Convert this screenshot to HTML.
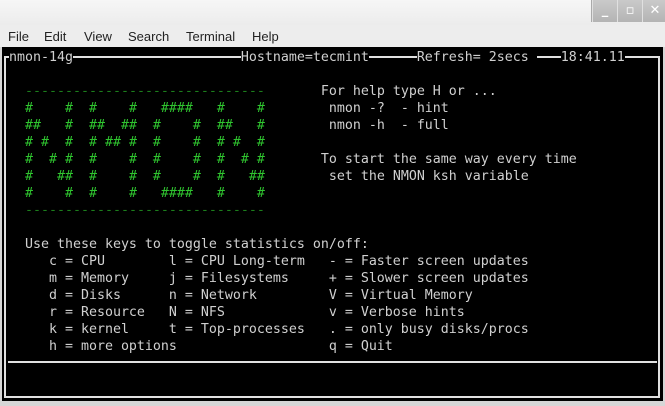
<!DOCTYPE html>
<html><head><meta charset="utf-8"><style>
body{margin:0;width:665px;height:406px;overflow:hidden;background:#d6d6d6;position:relative;font-family:"Liberation Sans",sans-serif}
#title{position:absolute;left:0;top:0;width:665px;height:25px;background:linear-gradient(#f6f6f6,#ececec)}
#btns{position:absolute;left:591px;top:0;width:74px;height:22px;background:linear-gradient(#cacaca,#b4b4b4);border-left:1px solid #aaa}
.b{position:absolute;top:0;height:22px;width:24px;color:#fff;font:bold 13px "DejaVu Sans",sans-serif;text-align:center;line-height:22px;border-left:1px solid #e0e0e0}
#menu{position:absolute;left:0;top:25px;width:665px;height:22px;background:#ededed;font-size:13px;color:#222}
#menu span{position:absolute;top:4px}
#term{position:absolute;left:2px;top:47px;width:661px;height:354px;background:#000}
pre{position:absolute;margin:0;left:1px;top:49px;font:13.29px/17px "DejaVu Sans Mono",monospace;color:#d0d0d0}
.g{color:#2fc42f}.d{color:#1c7f1c}
.ln{position:absolute;background:#e0e0e0}
.hb{background:#000}
</style></head><body>
<div id="title"></div>
<div id="btns"><div class="b" style="left:0">_</div><div class="b" style="left:25px">▫</div><div class="b" style="left:50px">✕</div></div>
<div id="menu"><span style="left:8px">File</span><span style="left:44px">Edit</span><span style="left:84px">View</span><span style="left:128px">Search</span><span style="left:186px">Terminal</span><span style="left:252px">Help</span></div>
<div id="term"></div>
<div class="ln" style="left:4px;top:56px;width:2px;height:342px"></div>
<div class="ln" style="left:658px;top:56px;width:2px;height:342px"></div>
<div class="ln" style="left:4px;top:56px;width:656px;height:2px"></div>
<div class="ln" style="left:4px;top:396px;width:656px;height:2px"></div>
<div class="ln" style="left:8px;top:361px;width:649px;height:2px"></div>
<pre> <span class="hb">nmon-14g</span>                     <span class="hb">Hostname=tecmint</span>      <span class="hb">Refresh= 2secs </span>   <span class="hb">18:41.11</span>

   <span class="d">------------------------------</span>       For help type H or ...
   <span class="g">#    #  #    #   ####   #    #</span>        nmon -?  - hint
   <span class="g">##   #  ##  ##  #    #  ##   #</span>        nmon -h  - full
   <span class="g"># #  #  # ## #  #    #  # #  #</span>
   <span class="g">#  # #  #    #  #    #  #  # #</span>       To start the same way every time
   <span class="g">#   ##  #    #  #    #  #   ##</span>        set the NMON ksh variable
   <span class="g">#    #  #    #   ####   #    #</span>
   <span class="d">------------------------------</span>

   Use these keys to toggle statistics on/off:
      c = CPU        l = CPU Long-term   - = Faster screen updates
      m = Memory     j = Filesystems     + = Slower screen updates
      d = Disks      n = Network         V = Virtual Memory
      r = Resource   N = NFS             v = Verbose hints
      k = kernel     t = Top-processes   . = only busy disks/procs
      h = more options                   q = Quit
</pre>
</body></html>
